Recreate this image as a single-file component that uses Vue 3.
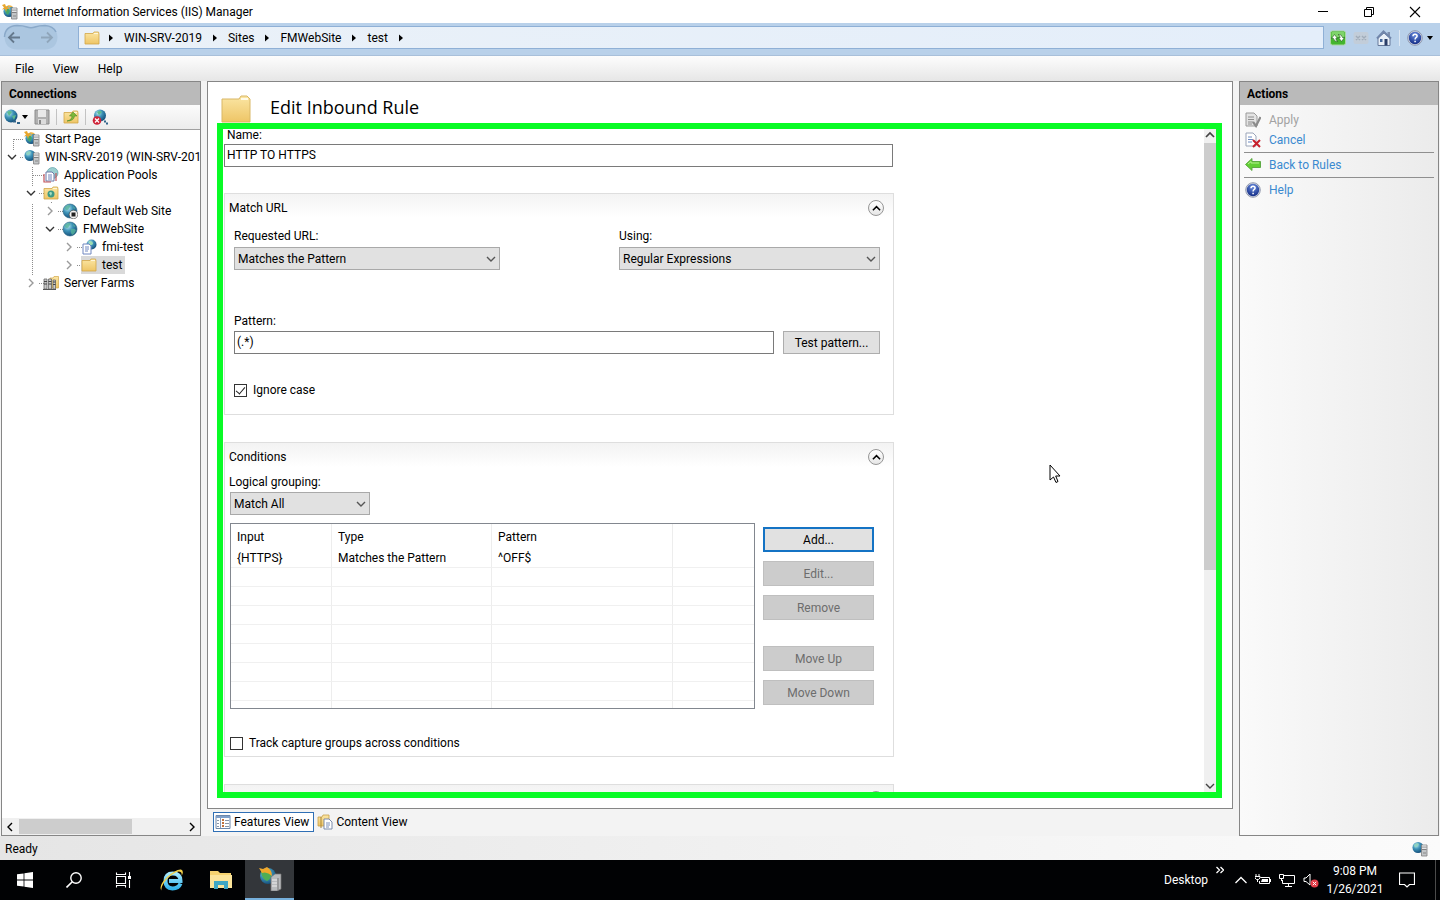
<script setup>
import { ref } from 'vue'

const crumbs = ['WIN-SRV-2019', 'Sites', 'FMWebSite', 'test']
const tree = [
  { label: 'Start Page', level: 0, icon: 'i-start', state: '' },
  { label: 'WIN-SRV-2019 (WIN-SRV-201', level: 0, icon: 'i-server', state: 'open' },
  { label: 'Application Pools', level: 1, icon: 'i-pools', state: '' },
  { label: 'Sites', level: 1, icon: 'i-sites', state: 'open' },
  { label: 'Default Web Site', level: 2, icon: 'i-stopped', state: 'closed' },
  { label: 'FMWebSite', level: 2, icon: 'i-globe', state: 'open' },
  { label: 'fmi-test', level: 3, icon: 'i-app', state: 'closed' },
  { label: 'test', level: 3, icon: 'i-folder', state: 'closed', selected: true },
  { label: 'Server Farms', level: 1, icon: 'i-farm', state: 'closed' }
]
const name = ref('HTTP TO HTTPS')
const pattern = ref('(.*)')
const ignoreCase = ref(true)
const track = ref(false)
</script>

<template>
  <div class="desktop">
    <svg class="defs" aria-hidden="true">
      <defs>
        <radialGradient id="g-globe" cx="35%" cy="30%" r="75%">
          <stop offset="0" stop-color="#b9e6ee" />
          <stop offset=".45" stop-color="#3d93b8" />
          <stop offset="1" stop-color="#124a77" />
        </radialGradient>
        <linearGradient id="g-folder" x1="0" y1="0" x2="0" y2="1">
          <stop offset="0" stop-color="#fbe6a4" />
          <stop offset="1" stop-color="#eec566" />
        </linearGradient>
        <radialGradient id="g-help" cx="50%" cy="25%" r="75%">
          <stop offset="0" stop-color="#6d8fe0" />
          <stop offset="1" stop-color="#122c86" />
        </radialGradient>
        <linearGradient id="g-ie" x1="0" y1="0" x2="0" y2="1">
          <stop offset="0" stop-color="#a5e9ff" />
          <stop offset="1" stop-color="#35b5ec" />
        </linearGradient>
        <symbol id="i-globe" viewBox="0 0 16 16">
          <circle cx="8" cy="8" r="7" fill="url(#g-globe)" stroke="#25617f" stroke-width=".6" />
          <path d="M3 4Q5 1.500 8 2Q9 4 7 5Q7 7 5 7Q3 7 2.500 5ZM9 8Q12 7 14 9Q13 13 10 14Q8 11 9 8ZM11 3Q13 4 13.500 6Q11 6 11 3Z" fill="#56b39a" opacity=".8" />
        </symbol>
        <symbol id="i-tower" viewBox="0 0 16 16">
          <path d="M9.500 4H15V15H9.500Z" fill="#c3c6c8" stroke="#808080" stroke-width=".8" />
          <path d="M10 6H14.500M10 8.500H14.500" stroke="#6f6f6f" stroke-width=".8" />
          <path d="M10 7.200H14.500M10 5H14.500" stroke="#fff" stroke-width=".8" />
          <path d="M11 12H14" stroke="#888" />
        </symbol>
        <symbol id="i-server" viewBox="0 0 16 16">
          <circle cx="6" cy="6.500" r="5.500" fill="url(#g-globe)" />
          <path d="M2 4Q5 1 7 3Q6 6 3 6.500Z" fill="#8fd3c0" />
          <use href="#i-tower" />
        </symbol>
        <symbol id="i-start" viewBox="0 0 16 16">
          <circle cx="7" cy="7.500" r="5.500" fill="url(#g-globe)" />
          <path d="M3 6Q7 3 8 7L6 11Q3 9 3 6Z" fill="#46a66c" />
          <path d="M3 0L4 2.500L7 1L5.500 3.500L8 5L5 5L4 8L3 5L0 5.500L2 3.500L0 1Z" fill="#e8a62c" />
          <path d="M6 1.500Q9 0.500 11 3Q8 3 7 4Z" fill="#efb243" />
          <use href="#i-tower" />
        </symbol>
        <symbol id="i-folder" viewBox="0 0 16 16">
          <path d="M1 3.500H9L10 2H14.500L15 4V14H1Z" fill="url(#g-folder)" stroke="#d2a648" stroke-width=".8" />
          <path d="M10 3.500H14" stroke="#fff6d8" />
        </symbol>
        <symbol id="i-sites" viewBox="0 0 16 16">
          <use href="#i-folder" />
          <circle cx="8" cy="9" r="3.500" fill="#3d9a86" />
          <path d="M6 8Q8 6 9 8L8 11Z" fill="#a9dfc0" />
        </symbol>
        <symbol id="i-pools" viewBox="0 0 16 16">
          <circle cx="9.500" cy="6" r="5.500" fill="#9ccfd0" stroke="#4b95a0" stroke-width=".6" />
          <path d="M3 5H9L11 7V14H3Z" fill="#fff" stroke="#6b78a8" />
          <path d="M1 7V15H8M13 6V14" fill="none" stroke="#c2545b" stroke-width="1.200" />
          <path d="M5 8H9M5 10H9M5 12H9" stroke="#7384bb" />
        </symbol>
        <symbol id="i-app" viewBox="0 0 16 16">
          <circle cx="10.500" cy="5.500" r="5" fill="url(#g-globe)" />
          <path d="M8 2Q12 2 12 5L9 7Z" fill="#9ddcb0" />
          <path d="M2 5H8L10 7V15H2Z" fill="#fff" stroke="#6f86c0" />
          <path d="M4 8H8M4 10H8M4 12H7" stroke="#6f86c0" />
        </symbol>
        <symbol id="i-stopped" viewBox="0 0 16 16">
          <use href="#i-globe" />
          <circle cx="11.500" cy="11.500" r="4.300" fill="#f4f4f4" stroke="#333" stroke-width=".6" />
          <path d="M9.500 9.500H13.500V13.500H9.500Z" fill="#222" />
        </symbol>
        <symbol id="i-farm" viewBox="0 0 16 16">
          <path d="M7 3H10L11 1.500H15.500V13H7Z" fill="url(#g-folder)" stroke="#d2a648" stroke-width=".7" />
          <path d="M1 4H4V14H1ZM5.500 4H8.500V14H5.500ZM10 5H12.500V14H10Z" fill="#c9c9c9" stroke="#676767" stroke-width=".8" />
          <path d="M1 6.500H4M5.500 6.500H8.500M10 7H12.500M1 9H4M5.500 9H8.500M10 9.500H12.500" stroke="#444" />
          <path d="M0 14.500H13" stroke="#555" />
        </symbol>
        <symbol id="i-help" viewBox="0 0 16 16">
          <circle cx="8" cy="8" r="7.300" fill="#d8dce8" stroke="#7d869e" stroke-width=".8" />
          <circle cx="8" cy="8" r="6.200" fill="url(#g-help)" />
          <path d="M6 6.200Q6 4.200 8 4.200Q10.100 4.200 10.100 6Q10.100 7 9 7.700Q8.100 8.300 8.100 9.500M8.100 10.800V12.200" fill="none" stroke="#fff" stroke-width="1.500" />
        </symbol>
        <symbol id="i-down" viewBox="0 0 10 10">
          <path d="M1 3L5 7L9 3" fill="none" stroke="currentColor" stroke-width="1.400" />
        </symbol>
        <symbol id="i-up" viewBox="0 0 10 10">
          <path d="M1 7L5 3L9 7" fill="none" stroke="currentColor" stroke-width="1.700" />
        </symbol>
        <symbol id="i-right" viewBox="0 0 10 10">
          <path d="M3 1L7 5L3 9" fill="none" stroke="currentColor" stroke-width="1.400" />
        </symbol>
        <symbol id="i-left" viewBox="0 0 10 10">
          <path d="M7 1L3 5L7 9" fill="none" stroke="currentColor" stroke-width="1.400" />
        </symbol>
        <symbol id="i-tri" viewBox="0 0 6 8">
          <path d="M1 0.500L5 4L1 7.500Z" fill="#000" />
        </symbol>
        <symbol id="i-caret" viewBox="0 0 6 4">
          <path d="M0 0H6L3 4Z" fill="#000" />
        </symbol>
      </defs>
    </svg>

    <header class="titlebar">
      <svg class="ic"><use href="#i-start" /></svg>
      <span class="grow">Internet Information Services (IIS) Manager</span>
      <button class="win" aria-label="Minimize"><svg viewBox="0 0 12 12"><path d="M1 5.500H11" stroke="#000" /></svg></button>
      <button class="win" aria-label="Restore"><svg viewBox="0 0 12 12"><path d="M1.500 3.500H8.500V10.500H1.500ZM3.500 3.500V1.500H10.500V8.500H8.500" fill="none" stroke="#000" /></svg></button>
      <button class="win" aria-label="Close"><svg viewBox="0 0 12 12"><path d="M1 1L11 11M11 1L1 11" stroke="#000" stroke-width="1.100" /></svg></button>
    </header>

    <nav class="addressbar" aria-label="Location">
      <svg class="navpill" viewBox="0 0 56 28">
        <path d="M14 1.500Q20 1.500 24 3Q28 4.500 32 3Q36 1.500 42 1.500Q54 2 54.500 13Q54 25 42 25.500H14Q2 25 1.500 13Q2 2 14 1.500Z" fill="#abc6e0" />
        <path d="M1.500 13Q2 2 14 1.500Q20 1.500 24 3Q28 4.500 32 3Q36 1.500 42 1.500Q50 2 53 8" fill="none" stroke="#8aa9c9" stroke-width="1.500" />
        <path d="M6 13.500H17M11 8.500L6 13.500L11 18.500" fill="none" stroke="#65798d" stroke-width="1.800" />
        <path d="M38 13.500H49M44 8.500L49 13.500L44 18.500" fill="none" stroke="#8fa5ba" stroke-width="1.800" />
      </svg>
      <div class="path">
        <svg class="ic"><use href="#i-folder" /></svg>
        <template v-for="c in crumbs" :key="c">
          <svg class="tri"><use href="#i-tri" /></svg>
          <a href="#" class="crumb">{{ c }}</a>
        </template>
        <svg class="tri"><use href="#i-tri" /></svg>
      </div>
      <div class="tools">
        <button aria-label="Refresh"><svg class="ic" viewBox="0 0 16 16">
          <rect x="0.500" y="1" width="15" height="14" rx="2" fill="#43b52e" stroke="#a9d79f" />
          <rect x="1.500" y="2" width="13" height="5" rx="1" fill="#7fd46a" />
          <path d="M1.500 8.500L4.500 4.500L7.500 8.500H5.800Q6 10.500 8 11.500Q4 12 3.500 8.500ZM14.500 7.500L11.500 11.500L8.500 7.500H10.200Q10 5.500 8 4.500Q12 4 12.500 7.500Z" fill="#fff" stroke="#1c5a16" stroke-width=".6" />
        </svg></button>
        <button aria-label="Stop"><svg class="ic" viewBox="0 0 16 16">
          <rect x="0.500" y="2" width="15" height="12" rx="2" fill="#c2cdd9" />
          <path d="M3 6L7 10M7 6L3 10M9 6L13 10M13 6L9 10" stroke="#a1adba" stroke-width="1.400" />
        </svg></button>
        <button aria-label="Home"><svg class="ic" viewBox="0 0 16 16">
          <path d="M2 8V15.500H14V8L8 3Z" fill="#e9f0f8" stroke="#66799a" />
          <path d="M11.500 2H14V7L11.500 5Z" fill="#7d8fae" />
          <path d="M1 8.500L7.500 1.500L15 8.500" fill="none" stroke="#7186ab" stroke-width="2" />
          <path d="M8.500 9H11.500V15.500H8.500Z" fill="#2a3e68" /><path d="M4 9H6.500V12H4Z" fill="#44689c" />
        </svg></button>
        <i class="sep"></i>
        <button class="help" aria-label="Help"><svg class="ic"><use href="#i-help" /></svg><svg class="caret"><use href="#i-caret" /></svg></button>
      </div>
    </nav>

    <nav class="menubar" aria-label="Menu">
      <button>File</button><button>View</button><button>Help</button>
    </nav>

    <main class="body">
      <aside class="panel connections">
        <h2>Connections</h2>
        <div class="ctools">
          <button aria-label="Connect"><svg class="ic" viewBox="0 0 16 16"><circle cx="7" cy="7" r="6.500" fill="url(#g-globe)" /><path d="M3 3Q6 1 8 3L5 7ZM8 7L12 6L10 11Z" fill="#5dbb8e" /><path d="M9 12.500H12M13 14H16" stroke="#31648a" stroke-width="2" /></svg><svg class="caret"><use href="#i-caret" /></svg></button>
          <button aria-label="Save"><svg class="ic" viewBox="0 0 16 16"><path d="M1 1H15V15H1Z" fill="#b0b0b0" stroke="#8c8c8c" /><path d="M4 1H12V8H4Z" fill="#e9e9e9" /><path d="M4 10H12V15H4Z" fill="#dcdcdc" /><path d="M6 11V15" stroke="#888" stroke-width="2" /></svg></button>
          <i class="sep"></i>
          <button aria-label="Up"><svg class="ic" viewBox="0 0 16 16"><use href="#i-folder" /><path d="M4 12Q9 11 9 7H6.500L10 3L14 7H11.500Q11 12 4 12Z" fill="#7db83a" stroke="#4c8a24" stroke-width=".6" /></svg></button>
          <i class="sep"></i>
          <button aria-label="Disconnect"><svg class="ic" viewBox="0 0 16 16"><circle cx="8" cy="6.500" r="6" fill="url(#g-globe)" /><path d="M5 3Q8 1 10 3L7 6Z" fill="#5dbb8e" /><path d="M12 12.500H14M14 14.500H16" stroke="#31648a" stroke-width="2" /><circle cx="5" cy="11.500" r="4.300" fill="#cf2438" /><path d="M3 9.500L7 13.500M7 9.500L3 13.500" stroke="#fff" stroke-width="1.300" /></svg></button>
        </div>
        <div class="tree">
          <svg class="lines" viewBox="0 0 100 180">
            <path d="M11.500 9V20M12 9.500H22M18 27.500H22M30.500 37V56M31 45.500H42M37 63.500H42M30.500 74V146M56 81.500H61M56 99.500H61M75 117.500H80M75 135.500H80M37 153.500H42M49.500 72V74" />
          </svg>
          <ul>
            <li v-for="n in tree" :key="n.label" :class="'l' + n.level">
              <span class="tw">
                <svg v-if="n.state === 'open'" class="open"><use href="#i-down" /></svg>
                <svg v-if="n.state === 'closed'" class="closed"><use href="#i-right" /></svg>
              </span>
              <span class="node" :class="{ selected: n.selected }"><svg class="ic"><use :href="'#' + n.icon" /></svg>{{ n.label }}</span>
            </li>
          </ul>
        </div>
        <div class="hscroll">
          <svg><use href="#i-left" /></svg><div class="track"><div class="thumb"></div></div><svg><use href="#i-right" /></svg>
        </div>
      </aside>

      <section class="center">
        <div class="page">
          <div class="heading">
            <svg viewBox="0 0 30 28"><path d="M1 4H18L20 1H26L29 4V27H1Z" fill="url(#g-folder)" stroke="#d9b766" /><path d="M20 4H27" stroke="#fffbe9" stroke-width="2" /></svg>
            <h1>Edit Inbound Rule</h1>
          </div>
          <div class="frame">
            <form class="form" @submit.prevent>
              <label class="namelabel" for="name">Name:</label>
              <input id="name" v-model="name" type="text" />

              <section class="group">
                <div class="ghead"><h3>Match URL</h3><button type="button" class="collapse" aria-label="Collapse Match URL"><svg><use href="#i-up" /></svg></button></div>
                <div class="match">
                  <div class="row">
                    <div class="field requested">
                      <label for="requested">Requested URL:</label>
                      <div class="combo"><select id="requested"><option>Matches the Pattern</option></select><svg><use href="#i-down" /></svg></div>
                    </div>
                    <div class="field using">
                      <label for="using">Using:</label>
                      <div class="combo"><select id="using"><option>Regular Expressions</option></select><svg><use href="#i-down" /></svg></div>
                    </div>
                  </div>
                  <div class="row patternrow">
                    <div class="field wide">
                      <label for="pattern">Pattern:</label>
                      <input id="pattern" v-model="pattern" type="text" />
                    </div>
                    <button type="button" class="btn test">Test pattern...</button>
                  </div>
                  <label class="check"><input v-model="ignoreCase" type="checkbox" />Ignore case</label>
                </div>
              </section>

              <section class="group">
                <div class="ghead"><h3>Conditions</h3><button type="button" class="collapse" aria-label="Collapse Conditions"><svg><use href="#i-up" /></svg></button></div>
                <div class="conds">
                  <div class="field grouping">
                    <label for="grouping">Logical grouping:</label>
                    <div class="combo"><select id="grouping"><option>Match All</option></select><svg><use href="#i-down" /></svg></div>
                  </div>
                  <div class="listrow">
                    <div class="tablebox">
                      <table>
                        <colgroup><col class="c1" /><col class="c2" /><col class="c3" /><col /></colgroup>
                        <thead><tr><th>Input</th><th>Type</th><th>Pattern</th><th></th></tr></thead>
                        <tbody>
                          <tr><td>{HTTPS}</td><td>Matches the Pattern</td><td>^OFF$</td><td></td></tr>
                          <tr v-for="r in 8" :key="r"><td></td><td></td><td></td><td></td></tr>
                        </tbody>
                      </table>
                    </div>
                    <div class="buttons">
                      <button type="button" class="btn primary">Add...</button>
                      <button type="button" class="btn" disabled>Edit...</button>
                      <button type="button" class="btn" disabled>Remove</button>
                      <button type="button" class="btn apart" disabled>Move Up</button>
                      <button type="button" class="btn" disabled>Move Down</button>
                    </div>
                  </div>
                  <label class="check"><input v-model="track" type="checkbox" />Track capture groups across conditions</label>
                </div>
              </section>

              <section class="group">
                <div class="ghead end"><button type="button" class="collapse" aria-label="Collapse"><svg><use href="#i-up" /></svg></button></div>
              </section>
            </form>
            <div class="vscroll">
              <svg><use href="#i-up" /></svg><div class="track"><div class="thumb"></div></div><svg><use href="#i-down" /></svg>
            </div>
          </div>
        </div>
        <div class="tabs">
          <button class="active"><svg class="ic" viewBox="0 0 16 16"><path d="M1 1.500H15V14.500H1Z" fill="#fff" stroke="#6c87ab" /><path d="M1 3H15" stroke="#7fa0ca" stroke-width="2" /><path d="M5.500 4V14" stroke="#8b9bb5" /><path d="M2 6.500H4M2 9.500H4M2 12.500H4M10 6.500H14M10 9.500H14M10 12.500H14" stroke="#8a96a8" /><path d="M7 6H9M7 9H9M7 12H9" stroke="#c1703c" stroke-width="2" /></svg>Features View</button>
          <button><svg class="ic" viewBox="0 0 16 16"><path d="M1 3H5L6 1H12V12H1Z" fill="url(#g-folder)" stroke="#c7a04a" stroke-width=".8" /><path d="M4 3V14" stroke="#a98538" /><path d="M7 5H12L15 8V15H7Z" fill="#fff" stroke="#7a8bab" /><path d="M9 9H13M9 11H13M9 13H12" stroke="#7a8fba" /></svg>Content View</button>
        </div>
      </section>

      <aside class="panel actions">
        <h2>Actions</h2>
        <button disabled><svg class="ic" viewBox="0 0 16 16"><path d="M1 1H9L12 4V14H1Z" fill="#e3e3e3" stroke="#9a9a9a" /><path d="M3 5H9M3 7.500H9M3 10H8M3 12H7" stroke="#8e8e8e" /><path d="M8 10L11 14L15.500 5" fill="none" stroke="#8b8b8b" stroke-width="2.200" /></svg>Apply</button>
        <a href="#"><svg class="ic" viewBox="0 0 16 16"><path d="M1 1H8L11 4V14H1Z" fill="#fff" stroke="#9aa4b8" /><path d="M3 5H7M3 7.500H8M3 10H7" stroke="#6d8ac0" /><path d="M8 8L15 15M15 8L8 15" stroke="#c8202c" stroke-width="2" /></svg>Cancel</a>
        <hr />
        <a href="#"><svg class="ic" viewBox="0 0 16 16"><path d="M0.500 7.500L7 1.500V4.500H15.500V10.500H7V13.500Z" fill="#62cf34" stroke="#56a33c" stroke-width=".9" /><path d="M3 7L6 4.500V6H14" fill="none" stroke="#b5f08f" /></svg>Back to Rules</a>
        <hr />
        <a href="#"><svg class="ic"><use href="#i-help" /></svg>Help</a>
      </aside>
    </main>

    <footer class="status"><span>Ready</span><svg class="ic"><use href="#i-server" /></svg></footer>

    <nav class="taskbar" aria-label="Taskbar">
      <button aria-label="Start"><svg class="s16" viewBox="0 0 16 16"><path d="M0 2.300L6.600 1.400V7.600H0ZM7.400 1.300L16 0V7.600H7.400ZM0 8.400H6.600V14.600L0 13.700ZM7.400 8.400H16V16L7.400 14.700Z" fill="#fff" /></svg></button>
      <button aria-label="Search"><svg class="s16" viewBox="0 0 16 16"><circle cx="10" cy="6" r="5.200" fill="none" stroke="#fff" stroke-width="1.400" /><path d="M6.300 9.700L0.500 15.500" stroke="#fff" stroke-width="1.600" /></svg></button>
      <button aria-label="Task View"><svg class="s16" viewBox="0 0 16 16"><path d="M1.500 4.500H10.500V11.500H1.500ZM1.500 0.500V2.500H10.500V0.500M1.500 15.500V13.500H10.500V15.500M14.500 0V4M14.500 8V16" fill="none" stroke="#fff" stroke-width="1.100" /><path d="M13 4H16V7H13Z" fill="#fff" /></svg></button>
      <button aria-label="Internet Explorer"><svg class="s24" viewBox="0 0 24 24"><path d="M20.500 15.500Q18.500 20.500 12.500 20.500Q5.500 20 5.500 13Q5.500 5.500 12.800 5.500Q20.500 5.500 20.500 13H9" fill="none" stroke="url(#g-ie)" stroke-width="4" /><path d="M1.500 22.500Q-2 18 7 9Q16 1 21 1.500Q24.500 3 21.500 8Q22.500 3.500 18.500 3.500Q13 4.500 6 12Q0.500 19 1.500 22.500Z" fill="#f2d04a" /></svg></button>
      <button aria-label="File Explorer"><svg class="s24" viewBox="0 0 24 24"><path d="M1 3H9L11 5H22V20H1Z" fill="#f5d26f" /><path d="M1 7H23V20H1Z" fill="#fbe49a" /><path d="M5 13H19V21H15V17H9V21H5Z" fill="#3fa7c4" /></svg></button>
      <button class="running" aria-label="IIS Manager"><svg class="s24" viewBox="0 0 24 24"><circle cx="10" cy="9" r="8" fill="url(#g-globe)" /><path d="M3 5Q9 0 13 5Q14 12 9 14Q4 12 3 5Z" fill="#4fae55" /><path d="M1 1L5 2L9 0Q14 3 14 9Q9 4 4 6Z" fill="#efa82c" /><path d="M13 10L17 7H23V22L19 24H13Z" fill="#b8bbbd" stroke="#757575" stroke-width=".7" /><path d="M14 13H19M14 16H19M14 19H19" stroke="#eee" /><path d="M20 11V23" stroke="#777" /></svg></button>
      <div class="tray">
        <span class="desk">Desktop</span>
        <svg class="more" viewBox="0 0 8 8"><path d="M0.500 1L3.500 4L0.500 7M4.500 1L7.500 4L4.500 7" fill="none" stroke="#fff" stroke-width="1.300" /></svg>
        <svg class="up" viewBox="0 0 12 12"><path d="M0.500 9L6 3.500L11.500 9" fill="none" stroke="#fff" stroke-width="1.300" /></svg>
        <svg class="s16" viewBox="0 0 16 16"><path d="M5.500 5.500H14.500V11.500H4.500V9M15.500 7V10" fill="none" stroke="#fff" /><path d="M7 7H13V10H6Z" fill="#fff" /><path d="M1 2V4M4 2V4M0 4.500H5V6L3.500 7.500H1.500L0 6ZM2.500 7V10" fill="none" stroke="#fff" /></svg>
        <svg class="s16" viewBox="0 0 16 16"><path d="M5 3.500H15.500V11.500H3.500V8M9.500 12V14.500M6 14.500H13" fill="none" stroke="#fff" /><path d="M0.500 2.500H4.500V6.500H0.500ZM2.500 6.500V9" fill="none" stroke="#fff" /></svg>
        <svg class="s16" viewBox="0 0 16 16"><path d="M1 6H3L7 2V13L3 9.500H1Z" fill="none" stroke="#fff" /><circle cx="11.500" cy="11.500" r="4" fill="#e33b47" /><path d="M9.800 9.800L13.200 13.200M13.200 9.800L9.800 13.200" stroke="#fff" /></svg>
        <div class="clock"><span>9:08 PM</span><span>1/26/2021</span></div>
        <svg class="s16 note" viewBox="0 0 16 16"><path d="M0.500 1H15.500V12.500H10.500L8 15L5.500 12.500H0.500Z" fill="none" stroke="#fff" stroke-width="1.200" /></svg>
        <i class="peek"></i>
      </div>
    </nav>

    <svg class="cursor" viewBox="0 0 12 20"><path d="M1 1V16L4.500 13L7 18.500L9 17.500L6.700 12H11Z" fill="#fff" stroke="#000" /></svg>
  </div>
</template>

<style>
body { margin: 0; overflow: hidden; }
</style>

<style scoped>
.desktop { position: relative; display: flex; flex-direction: column; height: 100vh; overflow: hidden; background: #f3f3f3; color: #000; font: 12px/18px Roboto, "Open Sans", sans-serif; }
.desktop * { box-sizing: border-box; }
.defs { position: absolute; width: 0; height: 0; }
svg { flex: none; }
button, input, select { font: inherit; color: inherit; margin: 0; }
button { padding: 0; border: 0; background: none; }
a { color: inherit; text-decoration: none; }
h1, h2, h3 { margin: 0; font-weight: 400; font-size: 12px; }
.ic, .s16 { width: 16px; height: 16px; }
.s24 { width: 24px; height: 24px; }
.grow { flex: 1; }
.caret { width: 6px; height: 4px; }

.titlebar { display: flex; align-items: center; height: 23px; padding: 0 5px 0 2px; gap: 5px; background: #fff; }
.titlebar .win { width: 41px; height: 20px; display: flex; align-items: center; justify-content: center; }
.win svg { width: 12px; height: 12px; }

.addressbar { display: flex; align-items: center; height: 33px; padding: 0 7px 3px 3px; background: #b9d1ea; border-bottom: 1px solid #a9c0da; }
.navpill { width: 56px; height: 28px; }
.path { flex: 1; display: flex; align-items: center; height: 23px; margin-left: 19px; padding-left: 5px; gap: 8px; background: linear-gradient(90deg, #eaf1f8, #e4eefa); border: 1px solid #8fb0d6; }
.tri { width: 6px; height: 8px; }
.path .tri + .crumb { margin: 0 2px; }
.tools { display: flex; align-items: center; margin-left: 6px; gap: 7px; }
.tools button, .ctools button { display: flex; align-items: center; }
.tools .sep { width: 1px; height: 16px; background: #dfe9f4; }
.tools .help { gap: 4px; }

.menubar { display: flex; align-items: center; height: 25px; padding-left: 15px; gap: 19px; background: linear-gradient(#fdfdfd, #e6e6e6); }

.body { flex: 1; min-height: 0; display: flex; gap: 6px; padding: 0 1px; }
.panel { display: flex; flex-direction: column; border: 1px solid #868686; background: #fff; }
.panel h2 { height: 23px; padding-left: 7px; line-height: 24px; font-weight: 700; background: #bababa; }
.connections { width: 200px; }
.ctools { display: flex; align-items: center; height: 25px; padding-left: 2px; gap: 6px; border-bottom: 1px solid #a0a0a0; background: linear-gradient(#fbfbfb, #ececec); }
.ctools button { gap: 2px; }
.ctools .sep { width: 1px; height: 16px; background: #c3c3c3; }
.tree { position: relative; flex: 1; overflow: hidden; }
.lines { position: absolute; left: 0; top: 0; width: 100px; height: 180px; }
.lines path { fill: none; stroke: #8c8c8c; stroke-dasharray: 1 1; }
ul { position: relative; margin: 0; padding: 0; list-style: none; }
li { display: flex; align-items: center; height: 18px; white-space: nowrap; padding-left: 5px; }
.l1 { padding-left: 24px; }
.l2 { padding-left: 43px; }
.l3 { padding-left: 62px; }
.tw { display: flex; width: 17px; flex: none; }
.tw svg { width: 10px; height: 10px; }
.open { color: #333; }
.closed { color: #9a9a9a; }
.node { display: flex; align-items: center; gap: 5px; padding-right: 3px; }
.selected { background: #d9d9d9; }
.hscroll { display: flex; align-items: center; height: 17px; padding: 0 3px; gap: 4px; background: #f0f0f0; }
.hscroll svg { width: 10px; height: 10px; }
.track { flex: 1; }
.hscroll .thumb { width: 69%; height: 15px; background: #cdcdcd; }

.center { flex: 1; min-width: 0; display: flex; flex-direction: column; }
.page { flex: 1; min-height: 0; display: flex; flex-direction: column; padding: 0 10px 10px 9px; border: 1px solid #868686; background: #fff; }
.heading { display: flex; align-items: flex-end; height: 41px; padding-left: 4px; gap: 19px; }
.heading svg { width: 30px; height: 28px; }
h1 { font: 18px/31px "Open Sans", "Noto Sans", sans-serif; }
.frame { flex: 1; min-height: 0; display: flex; border: 6px solid #09fb26; }
.form { flex: 1; min-width: 0; overflow: hidden; padding-left: 1px; display: flex; flex-direction: column; }
.form > * { flex: none; width: 100%; max-width: 670px; }
.namelabel { padding: 0 3px; line-height: 12px; height: 15px; }
input[type="text"] { height: 23px; width: 100%; padding: 0 2px 2px; border: 1px solid #7a7a7a; background: #fff; border-radius: 0; }
.form > input[type="text"] { max-width: 669px; }
.group { margin-top: 26px; border: 1px solid #dedede; }
.group + .group { margin-top: 27px; }
.ghead { display: flex; align-items: center; justify-content: space-between; height: 28px; padding: 0 9px 0 4px; background: linear-gradient(#f3f3f3, #fff 85%); }
.ghead.end { justify-content: flex-end; }
.collapse { display: flex; align-items: center; justify-content: center; width: 16px; height: 16px; border: 1px solid #969696; border-radius: 50%; background: linear-gradient(#fff, #e6e6e6); }
.collapse svg { width: 9px; height: 9px; }
.match { display: flex; flex-direction: column; padding: 5px 13px 15px 9px; }
.row { display: flex; justify-content: space-between; }
.field { display: flex; flex-direction: column; gap: 2px; }
.requested { width: 266px; }
.using { width: 261px; }
.patternrow { margin-top: 42px; gap: 9px; align-items: flex-end; }
.field.wide { flex: 1; gap: 1px; }
.combo { position: relative; display: flex; }
.combo svg { position: absolute; right: 4px; top: 7px; width: 10px; height: 10px; color: #555; pointer-events: none; }
select { appearance: none; width: 100%; height: 23px; padding: 0 3px; border: 1px solid #a9a9a9; border-radius: 0; background: #e1e1e1; }
.btn { height: 25px; border: 1px solid #adadad; background: #e1e1e1; }
.btn:disabled { color: #6d6d6d; background: #cccccc; border-color: #bfbfbf; }
.btn.test { width: 97px; height: 23px; }
.btn.primary { border: 2px solid #1473c4; }
.check { display: flex; align-items: center; gap: 6px; }
.match .check { margin-top: 27px; }
.check input { appearance: none; position: relative; width: 13px; height: 13px; border: 1px solid #333; background: #fff; }
.check input:checked::after { content: ""; position: absolute; left: 3px; top: 0; width: 4px; height: 8px; border: solid #222; border-width: 0 1px 1px 0; transform: rotate(40deg); }
.conds { display: flex; flex-direction: column; padding: 2px 19px 4px 5px; }
.field.grouping { width: 140px; gap: 1px; }
.grouping label { margin-left: -1px; }
.listrow { display: flex; gap: 8px; margin: 8px 0 25px; }
.tablebox { flex: 1; height: 186px; overflow: hidden; border: 1px solid #82878f; }
table { width: 100%; table-layout: fixed; border-collapse: separate; border-spacing: 0; }
.c1 { width: 101px; }
.c2 { width: 160px; }
.c3 { width: 181px; }
th, td { height: 19px; padding: 0 6px; text-align: left; font-weight: 400; line-height: 18px; border-right: 1px solid #ededed; border-bottom: 1px solid #f0f0f0; white-space: nowrap; }
th { height: 25px; border-bottom: 0; }
th:last-child, td:last-child { border-right: 0; }
.buttons { display: flex; flex-direction: column; gap: 9px; width: 111px; padding-top: 4px; }
.apart { margin-top: 17px; }
.vscroll { display: flex; flex-direction: column; align-items: center; width: 12px; padding: 1px 0; background: #f0f0f0; }
.vscroll svg { width: 10px; height: 10px; color: #444; }
.vscroll .track { width: 12px; padding-top: 3px; }
.vscroll .thumb { height: 67%; background: #cdcdcd; }
.tabs { display: flex; height: 27px; padding: 3px 0 4px 6px; gap: 2px; }
.tabs button { display: flex; align-items: center; gap: 3px; padding-right: 4px; border: 1px solid transparent; }
.tabs .active { padding-left: 1px; border-color: #2f6fb5; background: #fff; }

.actions { width: 200px; background: linear-gradient(90deg, #fafafa, #ebebeb); }
.actions h2 { margin-bottom: 5px; }
.actions a, .actions button { display: flex; align-items: center; height: 20px; padding-left: 5px; gap: 8px; color: #3a8ad0; }
.actions button { color: #a2a2a2; }
hr { width: 190px; margin: 2px 0; border: 0; border-top: 1px solid #8f8f8f; align-self: center; }

.status { display: flex; align-items: center; justify-content: space-between; height: 24px; padding: 2px 12px 0 5px; background: linear-gradient(90deg, #e5e5e5, #fbfbfb); }

.taskbar { display: flex; height: 40px; background: #010204; color: #fff; }
.taskbar button { display: flex; align-items: center; justify-content: center; width: 49px; }
.taskbar .running { background: #33363a; border-bottom: 2px solid #76b0dc; }
.tray { display: flex; align-items: center; margin-left: auto; gap: 8px; }
.more { width: 8px; height: 8px; margin-bottom: 20px; }
.up { width: 12px; height: 12px; margin-left: 3px; }
.clock { display: flex; flex-direction: column; align-items: center; width: 56px; }
.note { margin: 0 12px 0 8px; }
.peek { width: 5px; height: 40px; border-left: 1px solid #4b4b4b; }
.cursor { position: absolute; left: 1049px; top: 464px; width: 12px; height: 20px; }
</style>
